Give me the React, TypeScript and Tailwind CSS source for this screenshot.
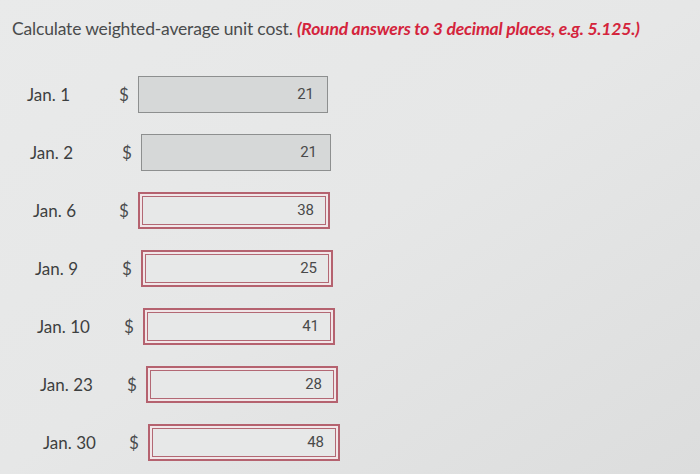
import React from "react";

type Row = {
  label: string;
  value: string;
  locked: boolean;
  shift: string;
  labelW: string;
};

// rows drift right a little as they go down, like the photo
const rows: Row[] = [
  { label: "Jan. 1", value: "21", locked: true, shift: "ml-[27px]", labelW: "w-[92px]" },
  { label: "Jan. 2", value: "21", locked: true, shift: "ml-[30px]", labelW: "w-[92px]" },
  { label: "Jan. 6", value: "38", locked: false, shift: "ml-[33px]", labelW: "w-[86px]" },
  { label: "Jan. 9", value: "25", locked: false, shift: "ml-[35px]", labelW: "w-[87px]" },
  { label: "Jan. 10", value: "41", locked: false, shift: "ml-[37px]", labelW: "w-[87px]" },
  { label: "Jan. 23", value: "28", locked: false, shift: "ml-[40px]", labelW: "w-[87px]" },
  { label: "Jan. 30", value: "48", locked: false, shift: "ml-[43px]", labelW: "w-[86px]" },
];

function AnswerBox({ value, locked }: { value: string; locked: boolean }) {
  if (locked) {
    return (
      <div className="w-[190px] h-[37px] border border-[#8d8f8f] bg-[#d6d8d8] flex items-center justify-end pr-[13px]">
        <span className="text-[15px] text-[#4a4a4a] font-['Roboto',sans-serif]">{value}</span>
      </div>
    );
  }
  return (
    <div className="w-[192px] h-[37px] border-2 border-[#b5626f] p-[2px] bg-[#f1e6e8]">
      <div className="w-full h-full border border-[#b36874] bg-[#e7e8e8] flex items-center justify-end pr-[11px]">
        <span className="text-[15px] text-[#4a4a4a] font-['Roboto',sans-serif]">{value}</span>
      </div>
    </div>
  );
}

export default function App() {
  return (
    <div className="w-[700px] h-[474px] overflow-hidden bg-gradient-to-br from-[#e9eaea] via-[#e6e7e7] to-[#dcdddd] font-['Lato',sans-serif]">
      <p className="pt-[17px] pl-[12px] text-[17.5px] leading-[24px] text-[#4a4c4d] tracking-[-0.18px]">
        Calculate weighted-average unit cost.{" "}
        <span className="italic font-bold text-[#d4243c]">(Round answers to 3 decimal places, e.g. 5.125.)</span>
      </p>

      <div className="mt-[35px] flex flex-col gap-[21px]">
        {rows.map(r => (
          <div key={r.label} className={`flex items-center ${r.shift}`}>
            <span className={`${r.labelW} text-[17px] text-[#3d3f40]`}>{r.label}</span>
            <span className="w-[19px] text-[17px] text-[#4a4c4d]">$</span>
            <AnswerBox value={r.value} locked={r.locked} />
          </div>
        ))}
      </div>
    </div>
  );
}
